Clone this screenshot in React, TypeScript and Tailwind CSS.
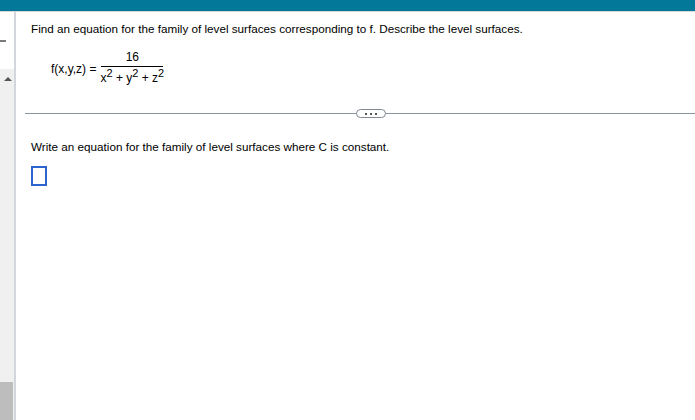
export default function App() {
  return (
    <div
      className="w-[695px] h-[420px] flex flex-col bg-white overflow-hidden text-black"
      style={{ fontFamily: '"Liberation Sans", Arial, sans-serif' }}
    >
      <div className="h-[12px] bg-[#037898] border-b border-[#d6d6d6] shrink-0" />
      <div className="flex flex-1 min-h-0">
        {/* Left rail */}
        <div className="w-[16px] shrink-0 flex flex-col border-r-2 border-[#d3d6dd]">
          <div className="h-[57px] bg-white relative">
            <div className="absolute left-0 top-[28px] w-[6px] h-[2px] bg-[#7a7a7a]" />
          </div>
          <div className="flex-1 bg-[#f0f0f0] flex flex-col">
            <div className="h-[20px] flex items-center pl-[4px]">
              <div className="w-0 h-0 border-l-[4px] border-r-[4px] border-b-[4px] border-l-transparent border-r-transparent border-b-[#555]" />
            </div>
            <div className="flex-1" />
            <div className="w-[13px] h-[38px] bg-[#bdbdbd]" />
          </div>
        </div>

        {/* Main */}
        <div className="flex-1 flex flex-col">
          <div className="pl-[15px] pt-[9px] text-[11.7px] leading-[15px]">
            Find an equation for the family of level surfaces corresponding to f. Describe the level surfaces.
          </div>
          <div className="pl-[35px] pt-[14px] flex items-center text-[12px]">
            <span className="mt-[3px]">f(x,y,z) =</span>
            <div className="ml-[4px] flex flex-col items-center">
              <span className="leading-[14px] mb-[2px]">16</span>
              <div className="w-[62px] h-px bg-black" />
              <span className="leading-[14px] pt-[4px] whitespace-nowrap">
                x<sup className="text-[11px] top-[-5px]">2</sup> + y
                <sup className="text-[11px] top-[-5px]">2</sup> + z
                <sup className="text-[11px] top-[-5px]">2</sup>
              </span>
            </div>
          </div>
          <div className="mt-[24px] ml-[9px] relative h-[9px] flex items-center">
            <div className="w-full h-px bg-[#8b95a1]" />
            <div className="absolute left-[331px] top-0 w-[30px] h-[9px] rounded-full border border-[#7f8893] bg-white flex items-center justify-center gap-[3px]">
              <div className="w-[2px] h-[2px] bg-[#555]" />
              <div className="w-[2px] h-[2px] bg-[#555]" />
              <div className="w-[2px] h-[2px] bg-[#555]" />
            </div>
          </div>
          <div className="pl-[15px] pt-[21px] text-[11.7px] leading-[15px]">
            Write an equation for the family of level surfaces where C is constant.
          </div>
          <div className="ml-[15px] mt-[12px] w-[16px] h-[20px] border-2 border-[#2d63cf]" />
        </div>
      </div>
    </div>
  );
}
